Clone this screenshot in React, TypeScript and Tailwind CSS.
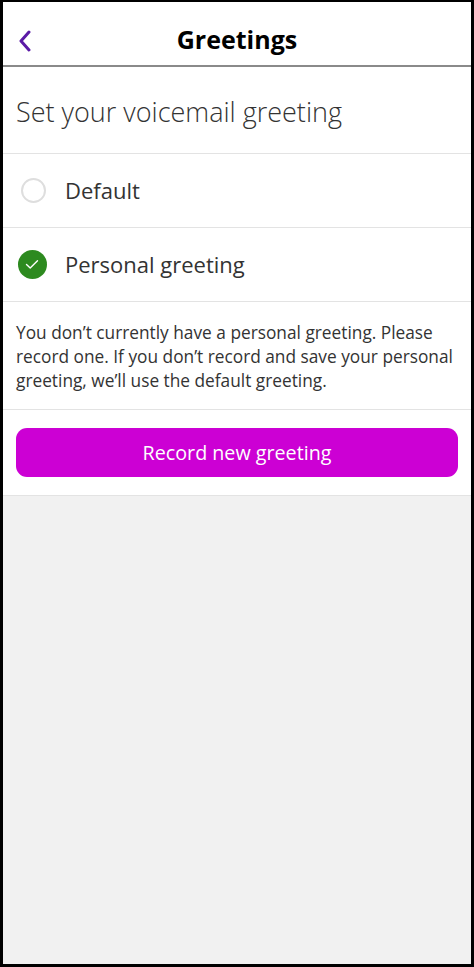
import React from "react";

export default function App() {
  return (
    <div
      className="w-[474px] h-[967px] box-border border-black border-l-[3px] border-r-[3px] border-t-[2px] border-b-[3px] bg-[#f1f1f1] flex flex-col overflow-hidden"
      style={{ fontFamily: '"Open Sans", "Noto Sans", sans-serif' }}
    >
      <div className="bg-white">
        <div className="h-[65px] border-b-2 border-[#8a8a8a] relative flex items-center justify-center">
          <svg
            className="absolute left-[14px] top-[28px]"
            width="16"
            height="22"
            viewBox="0 0 16 22"
            fill="none"
          >
            <path d="M12 2 L4 11 L12 20" stroke="#5b1aa6" strokeWidth="3" strokeLinecap="round" strokeLinejoin="round" />
          </svg>
          <h1 className="text-[25px] font-bold text-black leading-none mt-[11px]">Greetings</h1>
        </div>
        <div className="h-[87px] flex items-center px-[13px] border-b border-[#e3e3e3]">
          <span className="text-[27px] font-light text-[#333] leading-none mt-[2px]">Set your voicemail greeting</span>
        </div>
        <div className="h-[74px] flex items-center border-b border-[#e3e3e3]">
          <div className="w-[62px] flex justify-center">
            <div className="w-[25px] h-[25px] rounded-full border-2 border-[#dedede] ml-[-2px]" />
          </div>
          <span className="text-[22px] text-[#333]">Default</span>
        </div>
        <div className="h-[74px] flex items-center border-b border-[#e3e3e3]">
          <div className="w-[62px] flex justify-center">
            <div className="w-[29px] h-[29px] rounded-full bg-[#2d8a1f] flex items-center justify-center ml-[-4px]">
              <svg width="14" height="11" viewBox="0 0 14 11" fill="none">
                <path d="M1.5 5.5 L5.2 9 L12.5 1.8" stroke="white" strokeWidth="1.4" strokeLinecap="round" strokeLinejoin="round" />
              </svg>
            </div>
          </div>
          <span className="text-[22px] text-[#333]">Personal greeting</span>
        </div>
        <div className="px-[13px] pt-[19px] pb-[16px] border-b border-[#e3e3e3]">
          <p className="text-[17.3px] leading-[24px] text-[#333]">
            You don’t currently have a personal greeting. Please record one. If you don’t record and save your personal greeting, we’ll use the default greeting.
          </p>
        </div>
        <div className="px-[13px] pt-[18px] pb-[18px] border-b border-[#e3e3e3]">
          <button className="w-full h-[49px] rounded-[11px] bg-[#cc00d4] text-white text-[19.7px] flex items-center justify-center">
            Record new greeting
          </button>
        </div>
      </div>
      <div className="flex-1 bg-[#f1f1f1]" />
    </div>
  );
}
